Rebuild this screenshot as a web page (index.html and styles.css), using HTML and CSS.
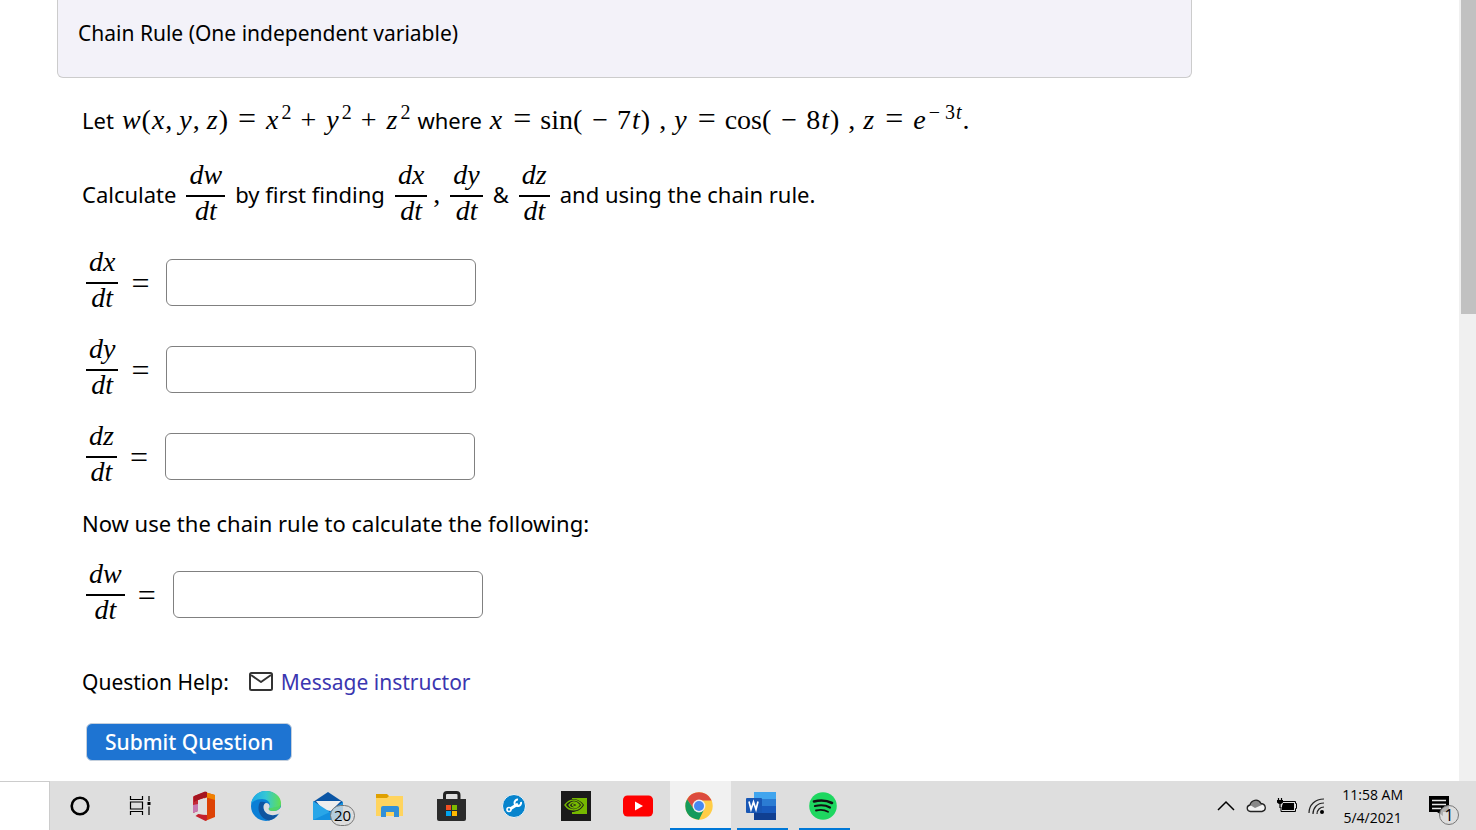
FILE: index.html
```html
<!DOCTYPE html>
<html lang="en">
<head>
<meta charset="utf-8">
<title>Chain Rule (One independent variable)</title>
<link rel="stylesheet" href="styles.css">
</head>
<body>
<div class="viewport">
  <main class="page">
    <header class="banner"><h1 class="banner-title">Chain Rule (One independent variable)</h1></header>
    <form class="question">
      <p class="given">
        <span>Let</span>
        <span class="math"><i>w</i>(<i>x</i><span class="comma">,</span><i>y</i><span class="comma">,</span><i>z</i>)<span class="rel">=</span><i>x</i><sup>2</sup><span class="bin">+</span><i>y</i><sup>2</sup><span class="bin">+</span><i>z</i><sup>2</sup></span>
        <span>where</span>
        <span class="math"><i>x</i><span class="rel">=</span>sin(<span class="neg">−</span>7<i>t</i>)<span class="sep">,</span><i>y</i><span class="rel">=</span>cos(<span class="neg">−</span>8<i>t</i>)<span class="sep">,</span><i>z</i><span class="rel">=</span><i>e</i><sup>− 3<i>t</i></sup>.</span>
      </p>
      <p class="task">
        <span>Calculate</span>
        <span class="frac"><i class="num">dw</i><i class="den">dt</i></span>
        <span>by first finding</span>
        <span class="listed"><span class="frac"><i class="num">dx</i><i class="den">dt</i></span><span class="math">,</span></span>
        <span class="frac"><i class="num">dy</i><i class="den">dt</i></span>
        <span>&amp;</span>
        <span class="frac"><i class="num">dz</i><i class="den">dt</i></span>
        <span>and using the chain rule.</span>
      </p>
      <div class="answer">
        <label class="answer-label" for="dx"><span class="frac"><i class="num">dx</i><i class="den">dt</i></span><span class="equals">=</span></label>
        <input class="answer-box" id="dx" type="text">
      </div>
      <div class="answer">
        <label class="answer-label" for="dy"><span class="frac"><i class="num">dy</i><i class="den">dt</i></span><span class="equals">=</span></label>
        <input class="answer-box" id="dy" type="text">
      </div>
      <div class="answer">
        <label class="answer-label" for="dz"><span class="frac"><i class="num">dz</i><i class="den">dt</i></span><span class="equals">=</span></label>
        <input class="answer-box" id="dz" type="text">
      </div>
      <p class="then">Now use the chain rule to calculate the following:</p>
      <div class="answer">
        <label class="answer-label" for="dw"><span class="frac"><i class="num">dw</i><i class="den">dt</i></span><span class="equals">=</span></label>
        <input class="answer-box" id="dw" type="text">
      </div>
      <div class="help">
        <span>Question Help:</span>
        <a class="message" href="#message">
          <svg width="24" height="20" viewBox="0 0 24 20" fill="none" stroke="#333" stroke-width="2" stroke-linejoin="round"><rect x="1" y="1" width="22" height="17" rx="1.5"/><path d="M2 3l10 7 10-7"/></svg>
          Message instructor</a>
      </div>
      <button class="submit" type="button">Submit Question</button>
    </form>
  </main>
  <div class="scrollbar"><div class="thumb"></div></div>
</div>
<footer class="shell">
  <div class="corner"></div>
  <nav class="taskbar">
    <div class="apps">
      <button class="app" aria-label="Cortana"><svg width="30" height="30" viewBox="0 0 30 30"><circle cx="15" cy="15" r="8.3" fill="none" stroke="#000" stroke-width="2.6"/></svg></button>
      <button class="app" aria-label="Task view"><svg width="30" height="30" viewBox="0 0 30 30" fill="none" stroke="#000" stroke-width="1.2"><path d="M3.500 5v3.500h12V5M3.500 24v-3.500h12V24M3.500 11h12v7h-12zM22 5v5M22 15.500V24"/><path d="M20.500 11h3v3h-3z" fill="#000" stroke="none"/></svg></button>
      <button class="app" aria-label="Office"><svg width="30" height="30" viewBox="0 0 30 30"><path d="M16 1L4 5.500V22l5-2V9l7-2.500z" fill="#c42835"/><path d="M4 14v8l5-2v-7z" fill="#c878b0"/><path d="M15 1l11 3v22l-10 4z" fill="#dd4205"/><path d="M16 1l10 3v5l-10-3z" fill="#f08000"/><path d="M6.500 25l3-2.300L18 24v5.300l-2 .5z" fill="#c41f2c"/><path d="M9 9.500L18 6.500V24l-9-1z" fill="#e0e0e0"/><path d="M16 .5L5 5v6l4-2 9-3V1z" fill="#a61520"/></svg></button>
      <button class="app" aria-label="Edge"><svg width="30" height="30" viewBox="0 0 30 30"><defs><linearGradient id="e1" x1="0" x2="1"><stop offset="0" stop-color="#1aa7e8"/><stop offset=".5" stop-color="#35c7d5"/><stop offset="1" stop-color="#62df4f"/></linearGradient></defs><circle cx="15" cy="15" r="15" fill="#0b7fd6"/><path d="M0 13C1 5 7 0 15 0c9 0 15 6 15 12 0 6-4 8-8 8-3 0-5-1-4-3 3-4-1-9-7-9C6 8 2 10 0 13z" fill="url(#e1)"/><path d="M9 11c-4 7 0 17 9 18.500 4-1 7-3 9.500-6.500-7 3-15 0-15-7 0-2 1-3.500 2.500-4.500-2-.8-4-.8-6-.5z" fill="#1155a0"/><path d="M12.500 16c0-2 1-4 3-4 3 .5 4 3 2.500 5-1 2 1 3 4 3 3 0 6-1 8-4v4c-.5 1-1.500 2-2.500 3-7 3-15 0-15-7z" fill="#dedede"/><path d="M18 17c-1 2 1 3 4 3 4 0 7-2 8-6-1 1-8 3-12 3z" fill="#4fd46a"/></svg></button>
      <button class="app" aria-label="Mail, 20 unread"><svg width="30" height="30" viewBox="0 0 30 30"><path d="M0 11L15 1l15 10v18H0z" fill="#0a55a5"/><path d="M3 10h25l-10 10-8-1z" fill="#eee"/><path d="M0 10l17 11L30 11v18H0z" fill="#29a6e8"/><path d="M0 29l17-8 13-10v18z" fill="#1490df"/></svg><span class="badge badge-mail">20</span></button>
      <button class="app" aria-label="File Explorer"><svg width="30" height="30" viewBox="0 0 30 30"><path d="M1 3h11l2 2v5H1z" fill="#dfa000"/><path d="M1 7h11l2-2h14v20H1z" fill="#ffd45e"/><path d="M6 26V17q0-2 2-2h14q2 0 2 2v9h-5v-5h-8v5z" fill="#3290d8"/></svg></button>
      <button class="app" aria-label="Microsoft Store"><svg width="30" height="30" viewBox="0 0 30 30"><path d="M7.500 9V4q0-2.500 2.500-2.500h9.500q2.500 0 2.500 2.500v5" fill="none" stroke="#222" stroke-width="3"/><path d="M0 8h29v20q0 2-2 2H2q-2 0-2-2z" fill="#2b2b2b"/><path d="M9 14h5v5H9z" fill="#f25022"/><path d="M15 14h5v5h-5z" fill="#7fba00"/><path d="M9 20h5v5H9z" fill="#00a4ef"/><path d="M15 20h5v5h-5z" fill="#ffb900"/></svg></button>
      <button class="app" aria-label="Support Assist"><svg width="30" height="30" viewBox="0 0 30 30"><circle cx="15" cy="15" r="11.500" fill="#0784cd" stroke="#f4f4f4"/><path d="M11 18l8-5" stroke="#fff" stroke-width="3"/><path d="M22 11a3.300 3.300 0 1 1-3-2.500" fill="none" stroke="#fff" stroke-width="2"/><circle cx="10" cy="18.500" r="2" fill="#0784cd" stroke="#fff" stroke-width="1.600"/></svg></button>
      <button class="app" aria-label="NVIDIA"><svg width="30" height="30" viewBox="0 0 30 30"><path d="M0 0h30v30H0z" fill="#1b1b1b"/><path d="M11 7h15v16H11z" fill="#76b900"/><path d="M11 8c6 0 10 3 12 6-3 5-8 7-12 7z" fill="#1b1b1b"/><path d="M4 14c5-7 13-6 17 0-4 6-12 7-17 0zM8 14c3-4 7-4 10 0-3 4-8 4-10 0zM11 14q3-3 5 0-2 3-5 0" fill="none" stroke="#76b900" stroke-width="1.400"/></svg></button>
      <button class="app" aria-label="YouTube"><svg width="30" height="30" viewBox="0 0 30 30"><rect y="4.500" width="30" height="21" rx="4.500" fill="#f00"/><path d="M12 10.500l8 4.500-8 4.500z" fill="#fff"/></svg></button>
      <button class="app app-current" aria-label="Chrome"><svg width="30" height="30" viewBox="0 0 30 30"><circle cx="15" cy="15" r="13.700" fill="#ffcd46"/><path d="M3.100 8.200A13.700 13.700 0 0 1 26.900 8.200L27.500 9.500H15L9.500 18z" fill="#dc4b3e"/><path d="M3.100 8.200A13.700 13.700 0 0 0 15 28.700L20 18.500 9 17z" fill="#149a5b"/><circle cx="15" cy="15" r="6.400" fill="#eee"/><circle cx="15" cy="15" r="5" fill="#4688f1"/></svg></button>
      <button class="app app-open" aria-label="Word"><svg width="30" height="30" viewBox="0 0 30 30"><path d="M8 1h22v7H8z" fill="#41a5ee"/><path d="M8 8h22v7H8z" fill="#2b7cd3"/><path d="M8 15h22v7H8z" fill="#185abd"/><path d="M8 22h22v7H8z" fill="#103f91"/><rect x="0" y="7" width="16" height="15" rx="1" fill="#1857b5"/><path d="M3 10.500l2 8L7.500 11l2.500 7.500 2-8" fill="none" stroke="#fff" stroke-width="1.700"/></svg></button>
      <button class="app app-open" aria-label="Spotify"><svg width="30" height="30" viewBox="0 0 30 30"><circle cx="15" cy="15" r="13.800" fill="#1ed760"/><g fill="none" stroke="#111" stroke-linecap="round"><path d="M6 10.500q10-2.500 18 1.500" stroke-width="2.600"/><path d="M7 15q9-2 15 1.500" stroke-width="2.200"/><path d="M8 19.500q7-1.500 12 1.200" stroke-width="1.800"/></g></svg></button>
    </div>
    <div class="tray">
      <svg width="18" height="30" viewBox="0 0 18 30"><path d="M1 19l8-8 8 8" fill="none" stroke="#000" stroke-width="1.500"/></svg>
      <svg width="20" height="30" viewBox="0 0 20 30"><path d="M4.500 20.500C.5 20 0 15 4 14c1-5 8-7 11-1.500 5 .5 6 7 1 8z" fill="#f2f2f2"/><path d="M4 14c1-5 8-7 11-1.500l2 1-8 3.500z" fill="#888"/><path d="M4.500 20.500C.5 20 0 15 4 14c1-5 8-7 11-1.500 5 .5 6 7 1 8z" fill="none" stroke="#222" stroke-width="1.300"/></svg>
      <svg width="20" height="30" viewBox="0 0 20 30"><path d="M6 10.500h12.500v2h1v5h-1v3H4V16" fill="none" stroke="#000" stroke-width="1"/><path d="M6 12h11v7H5v-4z"/><path d="M1.500 7v3M4.500 7v3M3 12v5" stroke="#000" stroke-width="1.200" fill="none"/><path d="M0 9h6v2.500q-3 3-6 0z"/></svg>
      <svg width="18" height="30" viewBox="0 0 18 30" fill="none" stroke="#222" stroke-width="1.200"><path d="M1 22C1 14 7 8 16 8M5 23c0-6 4-11 11-11M9 23c0-4 3-7 7-7"/><circle cx="14" cy="21" r="2" fill="#000" stroke="none"/></svg>
      <time class="clock"><span>11:58 AM</span><span>5/4/2021</span></time>
      <button class="notices" aria-label="1 notification"><svg width="20" height="20" viewBox="0 0 20 20"><path d="M0 0h20v16h-6v4l-6-4H0z"/><path d="M3 4.500h14M3 8.500h14M3 12.500h9" stroke="#e8e8e8" stroke-width="1.600"/></svg><span class="badge badge-notice">1</span></button>
    </div>
  </nav>
</footer>
</body>
</html>
```

FILE: styles.css
```css
* { box-sizing: border-box; }
body {
  margin: 0;
  height: 100vh;
  display: flex;
  flex-direction: column;
  background: #fff;
  color: #000;
  font-family: "Trebuchet MS", "Noto Sans", sans-serif;
  font-size: 21px;
  line-height: 28px;
}
p, h1 { margin: 0; font-size: inherit; font-weight: 400; }
button { font: inherit; border: 0; padding: 0; background: none; }

.viewport { flex: 1; min-height: 0; display: flex; }
.page { flex: 1; min-width: 0; padding: 0 267px 0 57px; overflow: hidden; }
.banner {
  padding: 19px 20px 30px;
  background: #f3f2f9;
  border: 1px solid #ccc;
  border-top: 0;
  border-radius: 0 0 6px 6px;
}
.question { padding: 24px 24px 0 25px; }

.math, .frac, .equals { font-family: "Liberation Serif", serif; font-size: 28px; }
.math i { margin: 0 1px; }
.given, .task, .then { font-size: 22px; white-space: nowrap; }
.given { display: flex; align-items: baseline; gap: 7px; line-height: 36px; }
.given sup { font-size: 20px; line-height: 0; vertical-align: 10px; margin-left: 2px; white-space: pre; }
.comma { margin-right: 6px; }
.equals, .rel { font-size: 32px; line-height: 28px; }
.rel { margin: 0 9px 0 10px; }
.bin { margin: 0 9px; }
.neg { margin: 0 9px 0 10px; }
.sep { margin: 0 7px 0 9px; }

.task { display: flex; align-items: center; gap: 10px; height: 68px; margin-top: 22px; }
.listed { display: flex; align-items: center; gap: 6px; }
.frac { display: inline-flex; flex-direction: column; text-align: center; line-height: 28px; }
.num { padding: 0 3px 6px; border-bottom: 2px solid #000; }
.den { padding: 0 3px 6px; }
.task .den { padding-bottom: 2px; }

.task + .answer { margin-top: 11px; }
.answer { display: flex; align-items: center; gap: 17px; height: 87px; padding-left: 4px; }
.answer-label { display: flex; align-items: center; gap: 13px; }
.answer-box {
  width: 310px;
  height: 47px;
  padding: 4px 8px;
  border: 1px solid #808080;
  border-radius: 6px;
  background: #fff;
  font: inherit;
}
.then { margin: 9px 0 14px; }
.help { display: flex; gap: 20px; margin-top: 30px; }
.message { display: flex; align-items: center; gap: 8px; color: #3b36b0; text-decoration: none; }
.submit {
  margin: 27px 0 0 4px;
  padding: 4px 18px;
  border: 1px solid #c4cfdc;
  border-radius: 6px;
  background: #1e74d2;
  color: #fff;
  font-weight: 500;
}

.scrollbar { width: 17px; padding-left: 2px; background: #f0f0f0; }
.thumb { height: 314px; background: #c1c1c1; }

.shell { display: flex; height: 49px; }
.corner { width: 50px; border-top: 1px solid #ccc; border-right: 1px solid #ccc; }
.taskbar { flex: 1; display: flex; justify-content: space-between; background: #dedede; }
.apps { display: flex; }
.app { position: relative; width: 51px; margin: 0 5px 0 6px; display: flex; align-items: center; justify-content: center; }
.app:first-child { margin-left: 4px; }
.app-open { border-bottom: 2px solid #0078d7; padding: 2px 3px 0 0; }
.app-current { width: 61px; margin: 0 0 0 2px; padding: 2px 3px 0 0; border-bottom: 2px solid #0078d7; background: #f1f1f1; }
.badge {
  position: absolute;
  border: 1px solid #777;
  border-radius: 12px;
  background: #dcdcdccc;
  font: 16px/18px "Open Sans", sans-serif;
  text-align: center;
}
.badge-mail { right: -2px; bottom: 4px; width: 25px; height: 21px; font-size: 15px; }
.badge-notice { left: 10px; top: 9px; width: 20px; height: 20px; }
.tray { display: flex; align-items: center; gap: 11px; padding-right: 27px; }
.clock { display: flex; flex-direction: column; margin-left: 5px; text-align: center; font: 14px/23px "Open Sans", sans-serif; }
.notices { position: relative; display: flex; margin-left: 15px; }
```
